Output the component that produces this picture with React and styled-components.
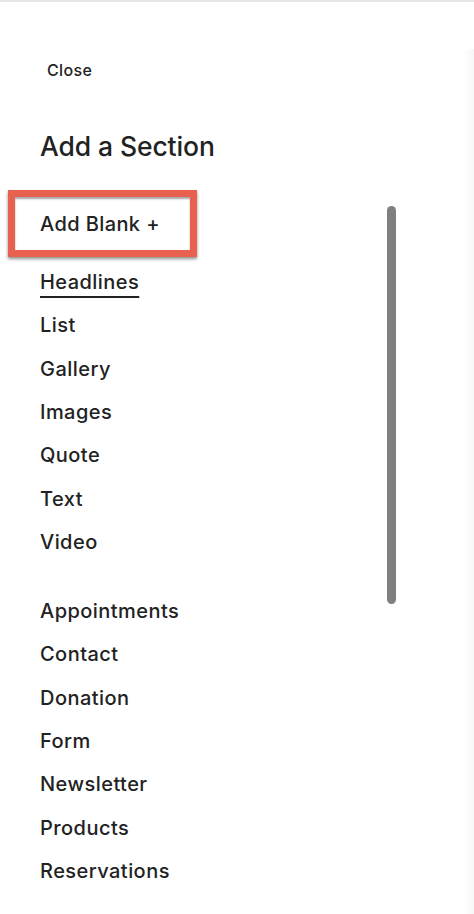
import React from 'react';
import styled, { createGlobalStyle } from 'styled-components';

const GlobalStyle = createGlobalStyle`
  html, body {
    margin: 0;
    padding: 0;
    background: #ffffff;
  }
  body {
    font-family: Inter, 'Noto Sans', 'Liberation Sans', sans-serif;
    color: #222222;
    -webkit-font-smoothing: antialiased;
  }
`;

const Page = styled.div`
  position: relative;
  width: 474px;
  height: 914px;
  overflow: hidden;
  border-top: 2px solid #e6e6e6;
  box-sizing: border-box;
`;

const EdgeShade = styled.div`
  position: absolute;
  top: 47px;
  right: 0;
  width: 9px;
  bottom: 0;
  background: linear-gradient(to right, #fdfdfd, #f7f7f7);
`;

const Panel = styled.div`
  display: flex;
  flex-direction: column;
  padding-left: 40px;
`;

const CloseButton = styled.button`
  align-self: flex-start;
  margin: 58px 0 0 7px;
  padding: 0;
  border: none;
  background: none;
  font-family: inherit;
  font-size: 16px;
  font-weight: 500;
  line-height: 20px;
  letter-spacing: 0.35px;
  color: #222222;
  cursor: pointer;
`;

const Title = styled.h2`
  margin: 50px 0 0;
  font-size: 26.5px;
  font-weight: 500;
  line-height: 32px;
  letter-spacing: -0.1px;
  color: #222222;
`;

const AddBlankRow = styled.div`
  position: relative;
  display: flex;
  align-items: center;
  height: 44px;
  margin-top: 40px;
  font-size: 20px;
  font-weight: 500;
  letter-spacing: 0.4px;
`;

const Highlight = styled.div`
  position: absolute;
  left: -32px;
  top: -12px;
  width: 189px;
  height: 67px;
  box-sizing: border-box;
  border: 7px solid #e8604f;
  box-shadow: 0 2px 3px rgba(0, 0, 0, 0.45), inset 0 2px 2px rgba(0, 0, 0, 0.35);
  pointer-events: none;
`;

const Group = styled.ul`
  list-style: none;
  margin: ${(p) => p.$top}px 0 0;
  padding: 0;
`;

const Item = styled.li`
  display: flex;
  align-items: center;
  height: 43.33px;
  font-size: 20px;
  font-weight: 500;
  letter-spacing: 0.45px;
  color: #222222;
`;

const ActiveLabel = styled.span`
  text-decoration: underline;
  text-decoration-thickness: 2px;
  text-underline-offset: 7px;
`;

const Scrollbar = styled.div`
  position: absolute;
  left: 387px;
  top: 204px;
  width: 9px;
  height: 398px;
  border-radius: 5px;
  background: #7f7f7f;
`;

const layouts = ['Headlines', 'List', 'Gallery', 'Images', 'Quote', 'Text', 'Video'];
const features = [
  'Appointments',
  'Contact',
  'Donation',
  'Form',
  'Newsletter',
  'Products',
  'Reservations',
];

const App = () => {
  return (
    <>
      <GlobalStyle />
      <Page>
        <EdgeShade />
        <Panel>
          <CloseButton>Close</CloseButton>
          <Title>Add a Section</Title>
          <AddBlankRow>
            Add Blank +
            <Highlight />
          </AddBlankRow>
          <Group $top={14.33}>
            {layouts.map((name, i) => (
              <Item key={name}>
                {i === 0 ? <ActiveLabel>{name}</ActiveLabel> : name}
              </Item>
            ))}
          </Group>
          <Group $top={25.67}>
            {features.map((name) => (
              <Item key={name}>{name}</Item>
            ))}
          </Group>
        </Panel>
        <Scrollbar />
      </Page>
    </>
  );
};

export default App;
